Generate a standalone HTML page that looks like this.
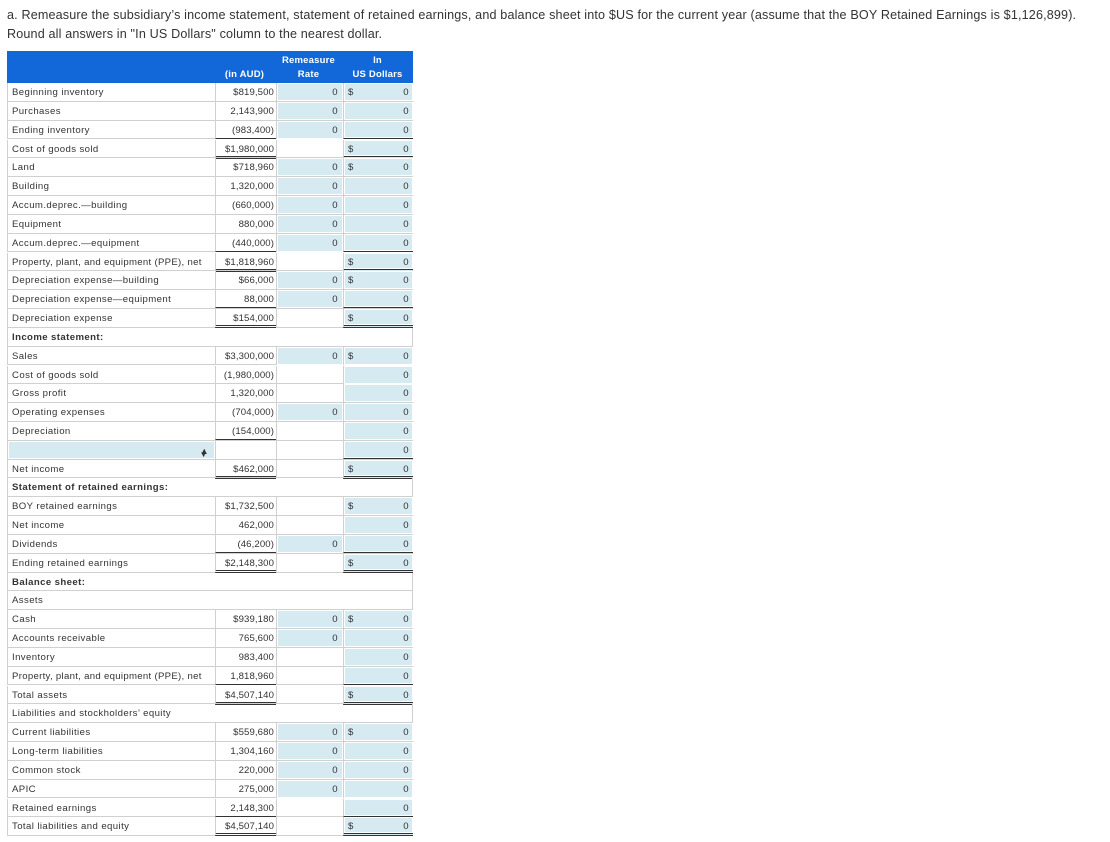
<!DOCTYPE html>
<html><head><meta charset="utf-8"><style>
body{margin:0;background:#fff;font-family:"Liberation Sans",sans-serif;color:#333;width:1110px;height:842px;position:relative;overflow:hidden}
.p{position:absolute;left:7px;font-size:12.6px;color:#333;white-space:nowrap;letter-spacing:0.15px}
.hd{position:absolute;left:7px;top:51px;width:406px;height:32px;background:#1268d8;color:#fff;font-weight:bold;font-size:9.5px;letter-spacing:0.2px}
.hd div{position:absolute;text-align:center}
.r{position:absolute;left:7px;width:406px;height:18.8px;border-bottom:1px solid #d0d0d0;box-sizing:border-box;font-size:9.6px;line-height:20px;letter-spacing:0.4px;border-left:1px solid #d0d0d0;border-right:1px solid #d0d0d0}
.r>div{position:absolute;top:0;height:18px;box-sizing:border-box;white-space:nowrap}
.l{left:0;width:207px;padding-left:4px}
.a{left:207px;width:61px;text-align:right;padding-right:2px;border-left:1px solid #d0d0d0;letter-spacing:0.1px}
.t{left:268px;width:67px;text-align:right;padding-right:5px;border-left:1px solid #d0d0d0}
.u{left:335px;width:70px;text-align:right;padding-right:4px;border-left:1px solid #d0d0d0}
.b{background:#d6eaf1;box-shadow:inset 0 0 0 1px #fff}
.u i{font-style:normal;position:absolute;left:4px}
.sb{border-bottom:1px solid #333}
.db{border-bottom:3px double #333;height:19px!important}
.h .l{font-weight:bold;width:404px}
.h2 .l{width:404px}
</style></head><body>
<div class="p" style="top:8px">a. Remeasure the subsidiary’s income statement, statement of retained earnings, and balance sheet into $US for the current year (assume that the BOY Retained Earnings is $1,126,899).</div>
<div class="p" style="top:27px">Round all answers in "In US Dollars" column to the nearest dollar.</div>
<div class="hd">
<div style="left:207px;width:61px;top:18px">(in AUD)</div>
<div style="left:268px;width:67px;top:4px">Remeasure</div>
<div style="left:268px;width:67px;top:18px">Rate</div>
<div style="left:335px;width:71px;top:4px">In</div>
<div style="left:335px;width:71px;top:18px">US Dollars</div>
</div>

<div class="r" style="top:83px"><div class="l">Beginning inventory</div><div class="a">$819,500</div><div class="t b">0</div><div class="u b"><i>$</i>0</div></div>
<div class="r" style="top:101.8px"><div class="l">Purchases</div><div class="a">2,143,900</div><div class="t b">0</div><div class="u b">0</div></div>
<div class="r" style="top:120.7px"><div class="l">Ending inventory</div><div class="a sb">(983,400)</div><div class="t b">0</div><div class="u b sb">0</div></div>
<div class="r" style="top:139.5px"><div class="l">Cost of goods sold</div><div class="a db">$1,980,000</div><div class="t"></div><div class="u b db"><i>$</i>0</div></div>
<div class="r" style="top:158.3px"><div class="l">Land</div><div class="a">$718,960</div><div class="t b">0</div><div class="u b"><i>$</i>0</div></div>
<div class="r" style="top:177.2px"><div class="l">Building</div><div class="a">1,320,000</div><div class="t b">0</div><div class="u b">0</div></div>
<div class="r" style="top:196px"><div class="l">Accum.deprec.—building</div><div class="a">(660,000)</div><div class="t b">0</div><div class="u b">0</div></div>
<div class="r" style="top:214.8px"><div class="l">Equipment</div><div class="a">880,000</div><div class="t b">0</div><div class="u b">0</div></div>
<div class="r" style="top:233.6px"><div class="l">Accum.deprec.—equipment</div><div class="a sb">(440,000)</div><div class="t b">0</div><div class="u b sb">0</div></div>
<div class="r" style="top:252.5px"><div class="l" style="letter-spacing:0.3px">Property, plant, and equipment (PPE), net</div><div class="a db">$1,818,960</div><div class="t"></div><div class="u b db"><i>$</i>0</div></div>
<div class="r" style="top:271.3px"><div class="l">Depreciation expense—building</div><div class="a">$66,000</div><div class="t b">0</div><div class="u b"><i>$</i>0</div></div>
<div class="r" style="top:290.1px"><div class="l">Depreciation expense—equipment</div><div class="a sb">88,000</div><div class="t b">0</div><div class="u b sb">0</div></div>
<div class="r" style="top:309px"><div class="l">Depreciation expense</div><div class="a db">$154,000</div><div class="t"></div><div class="u b db"><i>$</i>0</div></div>
<div class="r h" style="top:327.8px"><div class="l">Income statement:</div></div>
<div class="r" style="top:346.6px"><div class="l">Sales</div><div class="a">$3,300,000</div><div class="t b">0</div><div class="u b"><i>$</i>0</div></div>
<div class="r" style="top:365.5px"><div class="l">Cost of goods sold</div><div class="a">(1,980,000)</div><div class="t"></div><div class="u b">0</div></div>
<div class="r" style="top:384.3px"><div class="l">Gross profit</div><div class="a">1,320,000</div><div class="t"></div><div class="u b">0</div></div>
<div class="r" style="top:403.1px"><div class="l">Operating expenses</div><div class="a">(704,000)</div><div class="t b">0</div><div class="u b">0</div></div>
<div class="r" style="top:421.9px"><div class="l">Depreciation</div><div class="a sb">(154,000)</div><div class="t"></div><div class="u b">0</div></div>
<div class="r" style="top:440.8px"><div class="l b" style="text-align:right;padding-right:6px;font-size:9px">&#9650;<span style="position:absolute;right:7px;top:4px;font-size:8px">&#9660;</span></div><div class="a"></div><div class="t"></div><div class="u b sb">0</div></div>
<div class="r" style="top:459.6px"><div class="l">Net income</div><div class="a db">$462,000</div><div class="t"></div><div class="u b db"><i>$</i>0</div></div>
<div class="r h" style="top:478.4px"><div class="l">Statement of retained earnings:</div></div>
<div class="r" style="top:497.3px"><div class="l">BOY retained earnings</div><div class="a">$1,732,500</div><div class="t"></div><div class="u b"><i>$</i>0</div></div>
<div class="r" style="top:516.1px"><div class="l">Net income</div><div class="a">462,000</div><div class="t"></div><div class="u b">0</div></div>
<div class="r" style="top:534.9px"><div class="l">Dividends</div><div class="a sb">(46,200)</div><div class="t b">0</div><div class="u b sb">0</div></div>
<div class="r" style="top:553.8px"><div class="l">Ending retained earnings</div><div class="a db">$2,148,300</div><div class="t"></div><div class="u b db"><i>$</i>0</div></div>
<div class="r h" style="top:572.6px"><div class="l">Balance sheet:</div></div>
<div class="r h2" style="top:591.4px"><div class="l">Assets</div></div>
<div class="r" style="top:610.2px"><div class="l">Cash</div><div class="a">$939,180</div><div class="t b">0</div><div class="u b"><i>$</i>0</div></div>
<div class="r" style="top:629.1px"><div class="l">Accounts receivable</div><div class="a">765,600</div><div class="t b">0</div><div class="u b">0</div></div>
<div class="r" style="top:647.9px"><div class="l">Inventory</div><div class="a">983,400</div><div class="t"></div><div class="u b">0</div></div>
<div class="r" style="top:666.7px"><div class="l" style="letter-spacing:0.3px">Property, plant, and equipment (PPE), net</div><div class="a sb">1,818,960</div><div class="t"></div><div class="u b sb">0</div></div>
<div class="r" style="top:685.6px"><div class="l">Total assets</div><div class="a db">$4,507,140</div><div class="t"></div><div class="u b db"><i>$</i>0</div></div>
<div class="r h2" style="top:704.4px"><div class="l">Liabilities and stockholders’ equity</div></div>
<div class="r" style="top:723.2px"><div class="l">Current liabilities</div><div class="a">$559,680</div><div class="t b">0</div><div class="u b"><i>$</i>0</div></div>
<div class="r" style="top:742.1px"><div class="l">Long-term liabilities</div><div class="a">1,304,160</div><div class="t b">0</div><div class="u b">0</div></div>
<div class="r" style="top:760.9px"><div class="l">Common stock</div><div class="a">220,000</div><div class="t b">0</div><div class="u b">0</div></div>
<div class="r" style="top:779.7px"><div class="l">APIC</div><div class="a">275,000</div><div class="t b">0</div><div class="u b">0</div></div>
<div class="r" style="top:798.5px"><div class="l">Retained earnings</div><div class="a sb">2,148,300</div><div class="t"></div><div class="u b sb">0</div></div>
<div class="r" style="top:817.4px"><div class="l">Total liabilities and equity</div><div class="a db">$4,507,140</div><div class="t"></div><div class="u b db"><i>$</i>0</div></div>
</body></html>
